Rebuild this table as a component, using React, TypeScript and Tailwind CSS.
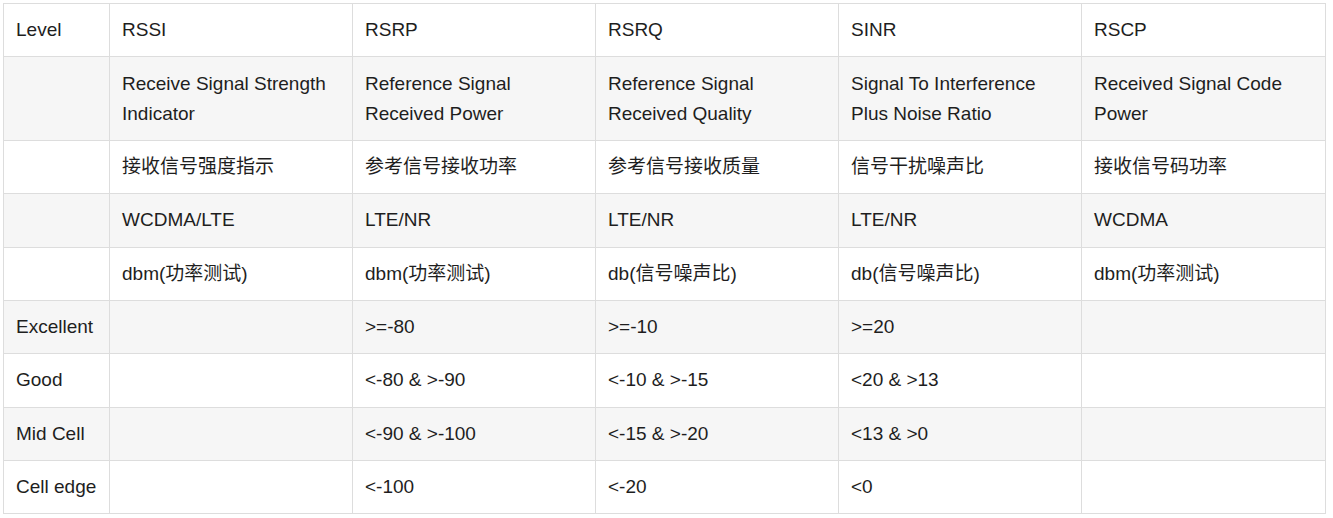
import React from 'react';

const headers = ['Level', 'RSSI', 'RSRP', 'RSRQ', 'SINR', 'RSCP'];

const rows: string[][] = [
  ['', 'Receive Signal Strength Indicator', 'Reference Signal Received Power', 'Reference Signal Received Quality', 'Signal To Interference Plus Noise Ratio', 'Received Signal Code Power'],
  ['', '接收信号强度指示', '参考信号接收功率', '参考信号接收质量', '信号干扰噪声比', '接收信号码功率'],
  ['', 'WCDMA/LTE', 'LTE/NR', 'LTE/NR', 'LTE/NR', 'WCDMA'],
  ['', 'dbm(功率测试)', 'dbm(功率测试)', 'db(信号噪声比)', 'db(信号噪声比)', 'dbm(功率测试)'],
  ['Excellent', '', '>=-80', '>=-10', '>=20', ''],
  ['Good', '', '<-80 & >-90', '<-10 & >-15', '<20 & >13', ''],
  ['Mid Cell', '', '<-90 & >-100', '<-15 & >-20', '<13 & >0', ''],
  ['Cell edge', '', '<-100', '<-20', '<0', ''],
];

const cell = 'border border-[#dddddd] px-3 py-[11.2px] align-top text-left font-normal';

export default function App() {
  return (
    <div className="bg-white min-h-screen pl-[3px] pt-[3px] text-[19px] leading-[30px] text-[#1e1e1e] font-['Liberation_Sans','Noto_Sans_CJK_SC',sans-serif]">
      <table className="border-collapse table-fixed w-[1323px]">
        <colgroup>
          <col className="w-[106px]" />
          <col className="w-[243px]" />
          <col className="w-[243px]" />
          <col className="w-[243px]" />
          <col className="w-[243px]" />
          <col className="w-[244px]" />
        </colgroup>
        <thead>
          <tr className="bg-white">
            {headers.map((h) => (
              <th key={h} className={cell}>{h}</th>
            ))}
          </tr>
        </thead>
        <tbody>
          {rows.map((r, i) => (
            <tr key={i} className={i % 2 === 0 ? 'bg-[#f6f6f6]' : 'bg-white'}>
              {r.map((c, j) => (
                <td key={j} className={cell}>{c}</td>
              ))}
            </tr>
          ))}
        </tbody>
      </table>
    </div>
  );
}
